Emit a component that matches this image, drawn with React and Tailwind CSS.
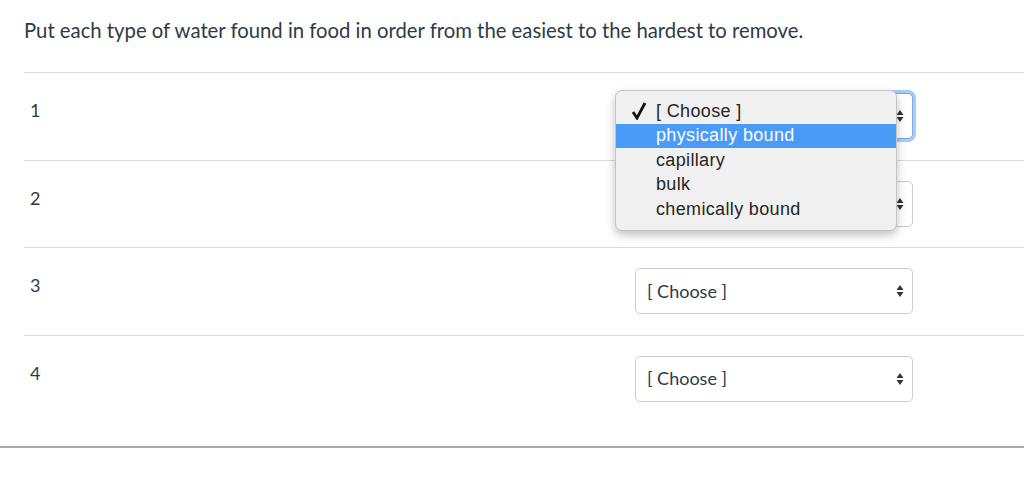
import React from "react";

const Arrows = () => (
  <svg width="8" height="14" viewBox="0 0 8 14" className="block">
    <path d="M4 1 L7.5 6 L0.5 6 Z" fill="#333" />
    <path d="M4 13 L7.5 8 L0.5 8 Z" fill="#333" />
  </svg>
);

const Select = ({ focused }) => (
  <div
    className={
      "flex h-[46px] w-[278px] items-center justify-between rounded-[5px] border bg-white pl-[11px] pr-[8px] text-[18px] text-[#2d3b45] " +
      (focused
        ? "border-[#7aa9e6] shadow-[0_0_0_3px_#a8cbf5]"
        : "border-[#c7cdd1]")
    }
  >
    <span>[ Choose ]</span>
    <Arrows />
  </div>
);

const items = ["[ Choose ]", "physically bound", "capillary", "bulk", "chemically bound"];

const Menu = () => (
  <div className="absolute left-[-20px] top-[17px] z-10 w-[282px] rounded-[7px] border border-[#c4c4c4] bg-[#f0f0f0] py-[8px] shadow-[0_4px_10px_rgba(0,0,0,0.25)] [font-family:'Liberation_Sans',Arial,sans-serif]">
    {items.map((t, i) => (
      <div
        key={t}
        className={
          "flex h-[24.5px] items-center text-[18px] tracking-[0.35px] " +
          (i === 1 ? "bg-[#4a9af8] text-white" : "text-[#262626]")
        }
      >
        <div className="flex w-[40px] justify-center pl-[5px]">
          {i === 0 && (
            <svg width="16" height="18" viewBox="0 0 16 18">
              <path d="M2 10 L6 16 L14 1" stroke="#111" strokeWidth="2.8" fill="none" strokeLinejoin="miter" />
            </svg>
          )}
        </div>
        <span>{t}</span>
      </div>
    ))}
  </div>
);

export default function App() {
  return (
    <div className="h-[492px] w-[1024px] bg-white [font-family:Lato,'Noto_Sans',sans-serif] text-[#2d3b45]">
      <div className="pl-[24px]">
        <div className="flex h-[72px] items-start pt-[15px] text-[20.3px]">
          Put each type of water found in food in order from the easiest to the hardest to remove.
        </div>
        {[1, 2, 3, 4].map((n) => (
          <div key={n} className="flex h-[87.5px] border-t border-[#d9d9d9]">
            <div className="w-[611px] pl-[6px] pt-[24px] text-[18px]">{n}</div>
            <div className="relative pt-[20px]">
              <Select focused={n === 1} />
              {n === 1 && <Menu />}
            </div>
          </div>
        ))}
      </div>
      <div className="mt-[24px] h-[2px] bg-[#aaaaaa]" />
    </div>
  );
}
